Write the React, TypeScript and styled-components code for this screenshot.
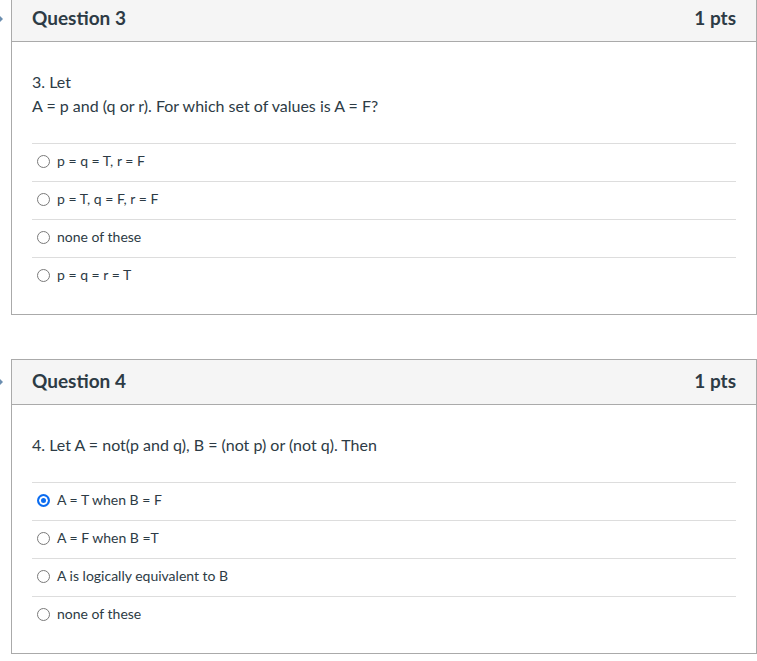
import styled, { createGlobalStyle } from "styled-components";

const GlobalStyle = createGlobalStyle`
  body {
    margin: 0;
    background: #ffffff;
    font-family: Lato, "Open Sans", sans-serif;
    color: #2d3b45;
  }
`;

const Page = styled.div`
  padding: 0 0 0 11px;
  margin-top: -4px;
  display: flex;
  flex-direction: column;
  gap: 44px;
`;

const Card = styled.div`
  position: relative;
  border: 1px solid #aaaaaa;
  background: #ffffff;
`;

const Pointer = styled.span`
  position: absolute;
  left: -12px;
  top: 19px;
  width: 0;
  height: 0;
  border-top: 3px solid transparent;
  border-bottom: 3px solid transparent;
  border-left: 3px solid #6b8eb0;
`;

const Header = styled.div`
  display: flex;
  align-items: center;
  justify-content: space-between;
  height: 44px;
  padding: 0 20px 3px;
  box-sizing: border-box;
  background: #f5f5f5;
  border-bottom: 1px solid #aaaaaa;
  font-size: 19px;
  font-weight: 700;
  color: #2d3b45;
  box-sizing: content-box;
  height: 41px;
`;

const Body = styled.div`
  padding: 28px 20px 19px;
`;

const Prompt = styled.div`
  font-size: 16px;
  line-height: 24px;
  margin-bottom: 25px;
`;

const Answers = styled.div`
  display: flex;
  flex-direction: column;
`;

const Answer = styled.label`
  display: flex;
  align-items: center;
  gap: 7px;
  height: 38px;
  padding: 0 0 4px 5px;
  border-top: 1px solid #dddddd;
  box-sizing: border-box;
  font-size: 14px;
  color: #2d3b45;
`;

const Radio = styled.span<{ $checked?: boolean }>`
  width: 13px;
  height: 13px;
  box-sizing: border-box;
  border-radius: 50%;
  flex-shrink: 0;
  margin-top: 1px;
  border: ${(p) => (p.$checked ? "2px solid #0b6cf0" : "1px solid #7a7a7a")};
  background: ${(p) => (p.$checked ? "#0b6cf0" : "#ffffff")};
  box-shadow: ${(p) => (p.$checked ? "inset 0 0 0 2px #ffffff" : "none")};
`;

type Question = {
  title: string;
  prompt: string[];
  answers: string[];
  selected?: number;
};

const questions: Question[] = [
  {
    title: "Question 3",
    prompt: ["3. Let", "A = p and (q or r). For which set of values is A = F?"],
    answers: ["p = q = T, r = F", "p = T, q = F, r = F", "none of these", "p = q = r = T"],
  },
  {
    title: "Question 4",
    prompt: ["4. Let A = not(p and q), B = (not p) or (not q). Then"],
    answers: ["A = T when B = F", "A = F when B =T", "A is logically equivalent to B", "none of these"],
    selected: 0,
  },
];

function QuestionCard({ q }: { q: Question }) {
  return (
    <Card>
      <Pointer />
      <Header>
        <span>{q.title}</span>
        <span>1 pts</span>
      </Header>
      <Body>
        <Prompt>
          {q.prompt.map((line) => (
            <div key={line}>{line}</div>
          ))}
        </Prompt>
        <Answers>
          {q.answers.map((a, i) => (
            <Answer key={a}>
              <Radio $checked={q.selected === i} />
              {a}
            </Answer>
          ))}
        </Answers>
      </Body>
    </Card>
  );
}

export default function App() {
  return (
    <>
      <GlobalStyle />
      <Page>
        {questions.map((q) => (
          <QuestionCard key={q.title} q={q} />
        ))}
      </Page>
    </>
  );
}
